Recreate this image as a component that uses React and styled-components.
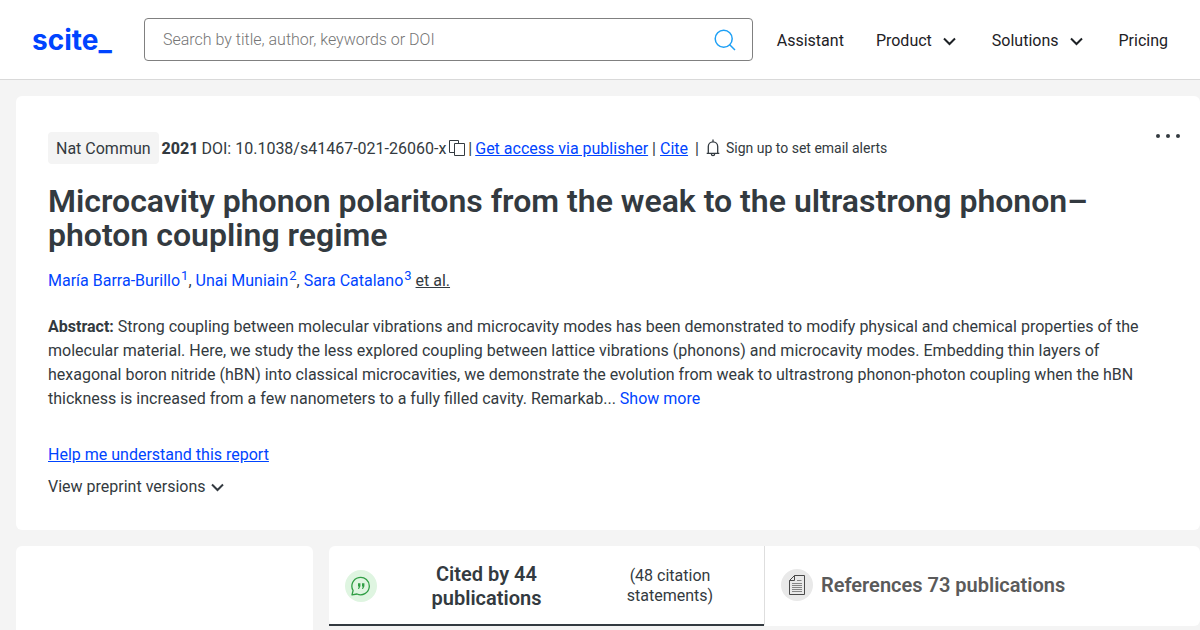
import React, { useState } from "react";
import styled, { createGlobalStyle } from "styled-components";

const GlobalStyle = createGlobalStyle`
  *, *::before, *::after {
    box-sizing: border-box;
  }

  body {
    margin: 0;
    background: #f4f4f4;
    color: #333a40;
    font-family: Roboto, "Liberation Sans", sans-serif;
    font-size: 16px;
    line-height: 24px;
  }

  button, input {
    font: inherit;
    color: inherit;
  }
`;

const Header = styled.header`
  display: flex;
  align-items: center;
  height: 80px;
  padding: 0 32px;
  background: #fff;
  border-bottom: 1px solid #d9d9d9;
`;

const Logo = styled.a`
  width: 112px;
  color: #0044ff;
  font-family: Inter, sans-serif;
  font-size: 28px;
  font-weight: 700;
  text-decoration: none;
`;

const SearchForm = styled.form`
  display: flex;
  flex: 1;
  align-items: center;
  height: 43px;
  padding: 0 16px 0 18px;
  background: #fff;
  border: 1px solid #808080;
  border-radius: 4px;
`;

const SearchInput = styled.input`
  flex: 1;
  min-width: 0;
  padding: 0;
  background: none;
  border: none;
  outline: none;
  font-weight: 300;

  &::placeholder {
    color: #757575;
    opacity: 1;
  }
`;

const IconButton = styled.button`
  display: inline-flex;
  padding: 0;
  background: none;
  border: none;
  cursor: pointer;
`;

const Nav = styled.nav`
  display: flex;
  gap: 32px;
  margin-left: 24px;
  padding-top: 2px;
  color: #1d2125;
`;

const NavLink = styled.a`
  color: inherit;
  text-decoration: none;
`;

const NavButton = styled.button`
  display: flex;
  align-items: center;
  gap: 8px;
  padding: 0;
  background: none;
  border: none;
  cursor: pointer;
`;

const Page = styled.main`
  display: flex;
  flex-direction: column;
  gap: 16px;
  padding: 16px 0 0 16px;
`;

const Card = styled.section`
  background: #fff;
  border-radius: 6px;
`;

const Report = styled(Card)`
  padding: 36px 20px 31px 32px;
`;

const MetaRow = styled.div`
  display: flex;
  justify-content: space-between;
`;

const Meta = styled.div`
  display: flex;
  align-items: center;
  gap: 3px;
`;

const Journal = styled.span`
  padding: 5px 8px 3px;
  background: #f4f4f4;
  border-radius: 4px;
`;

const MetaText = styled.span`
  margin: 0 ${(p) => p.$space || 0}px;
  padding-top: 2px;
  font-weight: ${(p) => (p.$bold ? 800 : 400)};
`;

const AlertButton = styled.button`
  display: flex;
  align-items: center;
  gap: 6px;
  padding: 0;
  background: none;
  border: none;
  font-size: 14px;
  cursor: pointer;
`;

const MoreButton = styled(IconButton)`
  align-self: flex-start;
`;

const Title = styled.h1`
  margin: 20px 0 0;
  font-size: 32px;
  font-weight: 600;
  line-height: 34px;
`;

const Authors = styled.p`
  margin: 17px 0 0;

  sup {
    margin-left: 1px;
    font-size: 13px;
    line-height: 0;
  }
`;

const Link = styled.a`
  color: #0044ff;
  text-decoration: ${(p) => (p.$plain ? "none" : "underline")};
`;

const TextButton = styled.button`
  display: ${(p) => (p.$block ? "flex" : "inline")};
  align-items: center;
  gap: 2px;
  padding: 0;
  background: none;
  border: none;
  color: ${(p) => (p.$accent ? "#0044ff" : "inherit")};
  text-decoration: ${(p) => (p.$underline ? "underline" : "none")};
  cursor: pointer;
`;

const Abstract = styled.p`
  margin: 22px 12px 0 0;
`;

const Actions = styled.div`
  display: flex;
  flex-direction: column;
  align-items: flex-start;
  gap: 8px;
  margin-top: 32px;
`;

const Columns = styled.div`
  display: flex;
  align-items: flex-start;
  gap: 16px;
`;

const Sidebar = styled(Card)`
  flex: 0 0 297px;
  min-height: 84px;
  border-radius: 6px 6px 0 0;
`;

const Tabs = styled(Card)`
  display: flex;
  flex: 1;
`;

const Tab = styled.button`
  display: flex;
  flex: 1;
  align-items: center;
  gap: 8px;
  min-height: 80px;
  padding: ${(p) => (p.$active ? "2px 16px 0" : "0 16px")};
  background: none;
  border: none;
  border-bottom: 2px solid ${(p) => (p.$active ? "#333a40" : "transparent")};
  color: ${(p) => (p.$active ? "#333a40" : "#5a5a5a")};
  cursor: pointer;

  & + & {
    border-left: 1px solid #dedede;
  }
`;

const TabIcon = styled.span`
  display: flex;
  flex: none;
  align-items: center;
  justify-content: center;
  width: 32px;
  height: 32px;
  background: ${(p) => p.$color};
  border-radius: 50%;
`;

const TabTitle = styled.strong`
  flex: ${(p) => (p.$grow ? "1" : "none")};
  padding: ${(p) => (p.$grow ? "0 34px 0 38px" : "0")};
  font-size: 20px;
  font-weight: 600;
`;

const TabNote = styled.span`
  width: 156px;
  padding: 0 28px;
  line-height: 20px;
`;

function Chevron() {
  return (
    <svg width="20" height="20" viewBox="0 0 20 20" fill="none" stroke="currentColor" strokeWidth="2">
      <path d="M4 7.500l5.500 5.500 5.500-5.500" />
    </svg>
  );
}

function SearchIcon() {
  return (
    <svg width="22" height="22" viewBox="0 0 22 22" fill="none" stroke="#1ea0f5" strokeWidth="1.5">
      <circle cx="9.7" cy="9.7" r="8.5" />
      <path d="M15.5 15.5l5.5 5.5" />
    </svg>
  );
}

function CopyIcon() {
  return (
    <svg width="16" height="16" viewBox="0 0 16 16" fill="none" stroke="currentColor">
      <path d="M5.5 12.5h-5v-12h9v3" />
      <path d="M5.5 3.5h10v12h-10z" />
    </svg>
  );
}

function BellIcon() {
  return (
    <svg width="14" height="18" viewBox="0 0 14 18" fill="none" stroke="currentColor" strokeWidth="1.3">
      <path d="M.7 14.300h12.600M2.300 14.300V7.500a4.700 4.700 0 0 1 9.400 0v6.800M7 2.800V.5M5.400 15a1.600 1.600 0 0 0 3.200 0" />
    </svg>
  );
}

function DotsIcon() {
  return (
    <svg width="24" height="8" viewBox="0 0 24 8" fill="#333a40">
      <circle cx="2" cy="4" r="2" />
      <circle cx="12" cy="4" r="2" />
      <circle cx="22" cy="4" r="2" />
    </svg>
  );
}

function QuoteIcon() {
  return (
    <svg width="20" height="20" viewBox="0 0 20 20" fill="none" stroke="#2f9e44" strokeWidth="1.3">
      <path d="M1 18.8l1.1-4.3A8.7 8.7 0 1 1 6 18z" strokeLinejoin="round" />
      <path d="M7 7.3h2.4v3L8 13H7l.8-2.6H7zM11 7.3h2.4v3L12 13h-1l.8-2.6H11z" fill="#2f9e44" stroke="none" />
    </svg>
  );
}

function DocumentIcon() {
  return (
    <svg width="16" height="20" viewBox="0 0 16 20" fill="none" stroke="#4a4a4a">
      <path d="M5.5.5h10v19H.5v-14zM5.5.5v5h-5" />
      <path d="M8 5.5h4.500M3 8.500h10M3 10.500h10M3 12.500h10M3 14.500h10M3 16.500h10" stroke="#858585" />
    </svg>
  );
}

const authors = [
  { name: "María Barra-Burillo", note: 1 },
  { name: "Unai Muniain", note: 2 },
  { name: "Sara Catalano", note: 3 },
];

export default function App() {
  const [tab, setTab] = useState("citations");

  return (
    <>
      <GlobalStyle />
      <Header>
        <Logo href="#">scite_</Logo>
        <SearchForm role="search" onSubmit={(e) => e.preventDefault()}>
          <SearchInput
            type="text"
            aria-label="Search"
            placeholder="Search by title, author, keywords or DOI"
          />
          <IconButton type="submit" aria-label="Submit search">
            <SearchIcon />
          </IconButton>
        </SearchForm>
        <Nav>
          <NavLink href="#">Assistant</NavLink>
          <NavButton type="button">
            Product <Chevron />
          </NavButton>
          <NavButton type="button">
            Solutions <Chevron />
          </NavButton>
          <NavLink href="#">Pricing</NavLink>
        </Nav>
      </Header>
      <Page>
        <Report>
          <MetaRow>
            <Meta>
              <Journal>Nat Commun</Journal>
              <MetaText $bold>2021</MetaText>
              <MetaText>DOI: 10.1038/s41467-021-26060-x</MetaText>
              <IconButton type="button" aria-label="Copy DOI">
                <CopyIcon />
              </IconButton>
              <MetaText>|</MetaText>
              <MetaText>
                <Link href="#">Get access via publisher</Link>
              </MetaText>
              <MetaText $space={1}>|</MetaText>
              <MetaText>
                <Link href="#">Cite</Link>
              </MetaText>
              <MetaText $space={4}>|</MetaText>
              <AlertButton type="button">
                <BellIcon />
                Sign up to set email alerts
              </AlertButton>
            </Meta>
            <MoreButton type="button" aria-label="More actions">
              <DotsIcon />
            </MoreButton>
          </MetaRow>
          <Title>
            Microcavity phonon polaritons from the weak to the ultrastrong phonon–photon coupling regime
          </Title>
          <Authors>
            {authors.map((author, i) => (
              <React.Fragment key={author.name}>
                {i > 0 && ", "}
                <Link href="#" $plain>
                  {author.name}
                  <sup>{author.note}</sup>
                </Link>
              </React.Fragment>
            ))}{" "}
            <TextButton type="button" $underline>
              et al.
            </TextButton>
          </Authors>
          <Abstract>
            <strong>Abstract:</strong> Strong coupling between molecular vibrations and microcavity modes has
            been demonstrated to modify physical and chemical properties of the molecular material. Here, we
            study the less explored coupling between lattice vibrations (phonons) and microcavity modes.
            Embedding thin layers of hexagonal boron nitride (hBN) into classical microcavities, we
            demonstrate the evolution from weak to ultrastrong phonon-photon coupling when the hBN thickness
            is increased from a few nanometers to a fully filled cavity. Remarkab...{" "}
            <TextButton type="button" $accent>
              Show more
            </TextButton>
          </Abstract>
          <Actions>
            <Link href="#">Help me understand this report</Link>
            <TextButton type="button" $block>
              View preprint versions <Chevron />
            </TextButton>
          </Actions>
        </Report>
        <Columns>
          <Sidebar as="aside" />
          <Tabs role="tablist">
            <Tab
              type="button"
              role="tab"
              aria-selected={tab === "citations"}
              $active={tab === "citations"}
              onClick={() => setTab("citations")}
            >
              <TabIcon $color="#dff5e1">
                <QuoteIcon />
              </TabIcon>
              <TabTitle $grow>Cited by 44 publications</TabTitle>
              <TabNote>(48 citation statements)</TabNote>
            </Tab>
            <Tab
              type="button"
              role="tab"
              aria-selected={tab === "references"}
              $active={tab === "references"}
              onClick={() => setTab("references")}
            >
              <TabIcon $color="#e9e9e9">
                <DocumentIcon />
              </TabIcon>
              <TabTitle>References 73 publications</TabTitle>
            </Tab>
          </Tabs>
        </Columns>
      </Page>
    </>
  );
}
